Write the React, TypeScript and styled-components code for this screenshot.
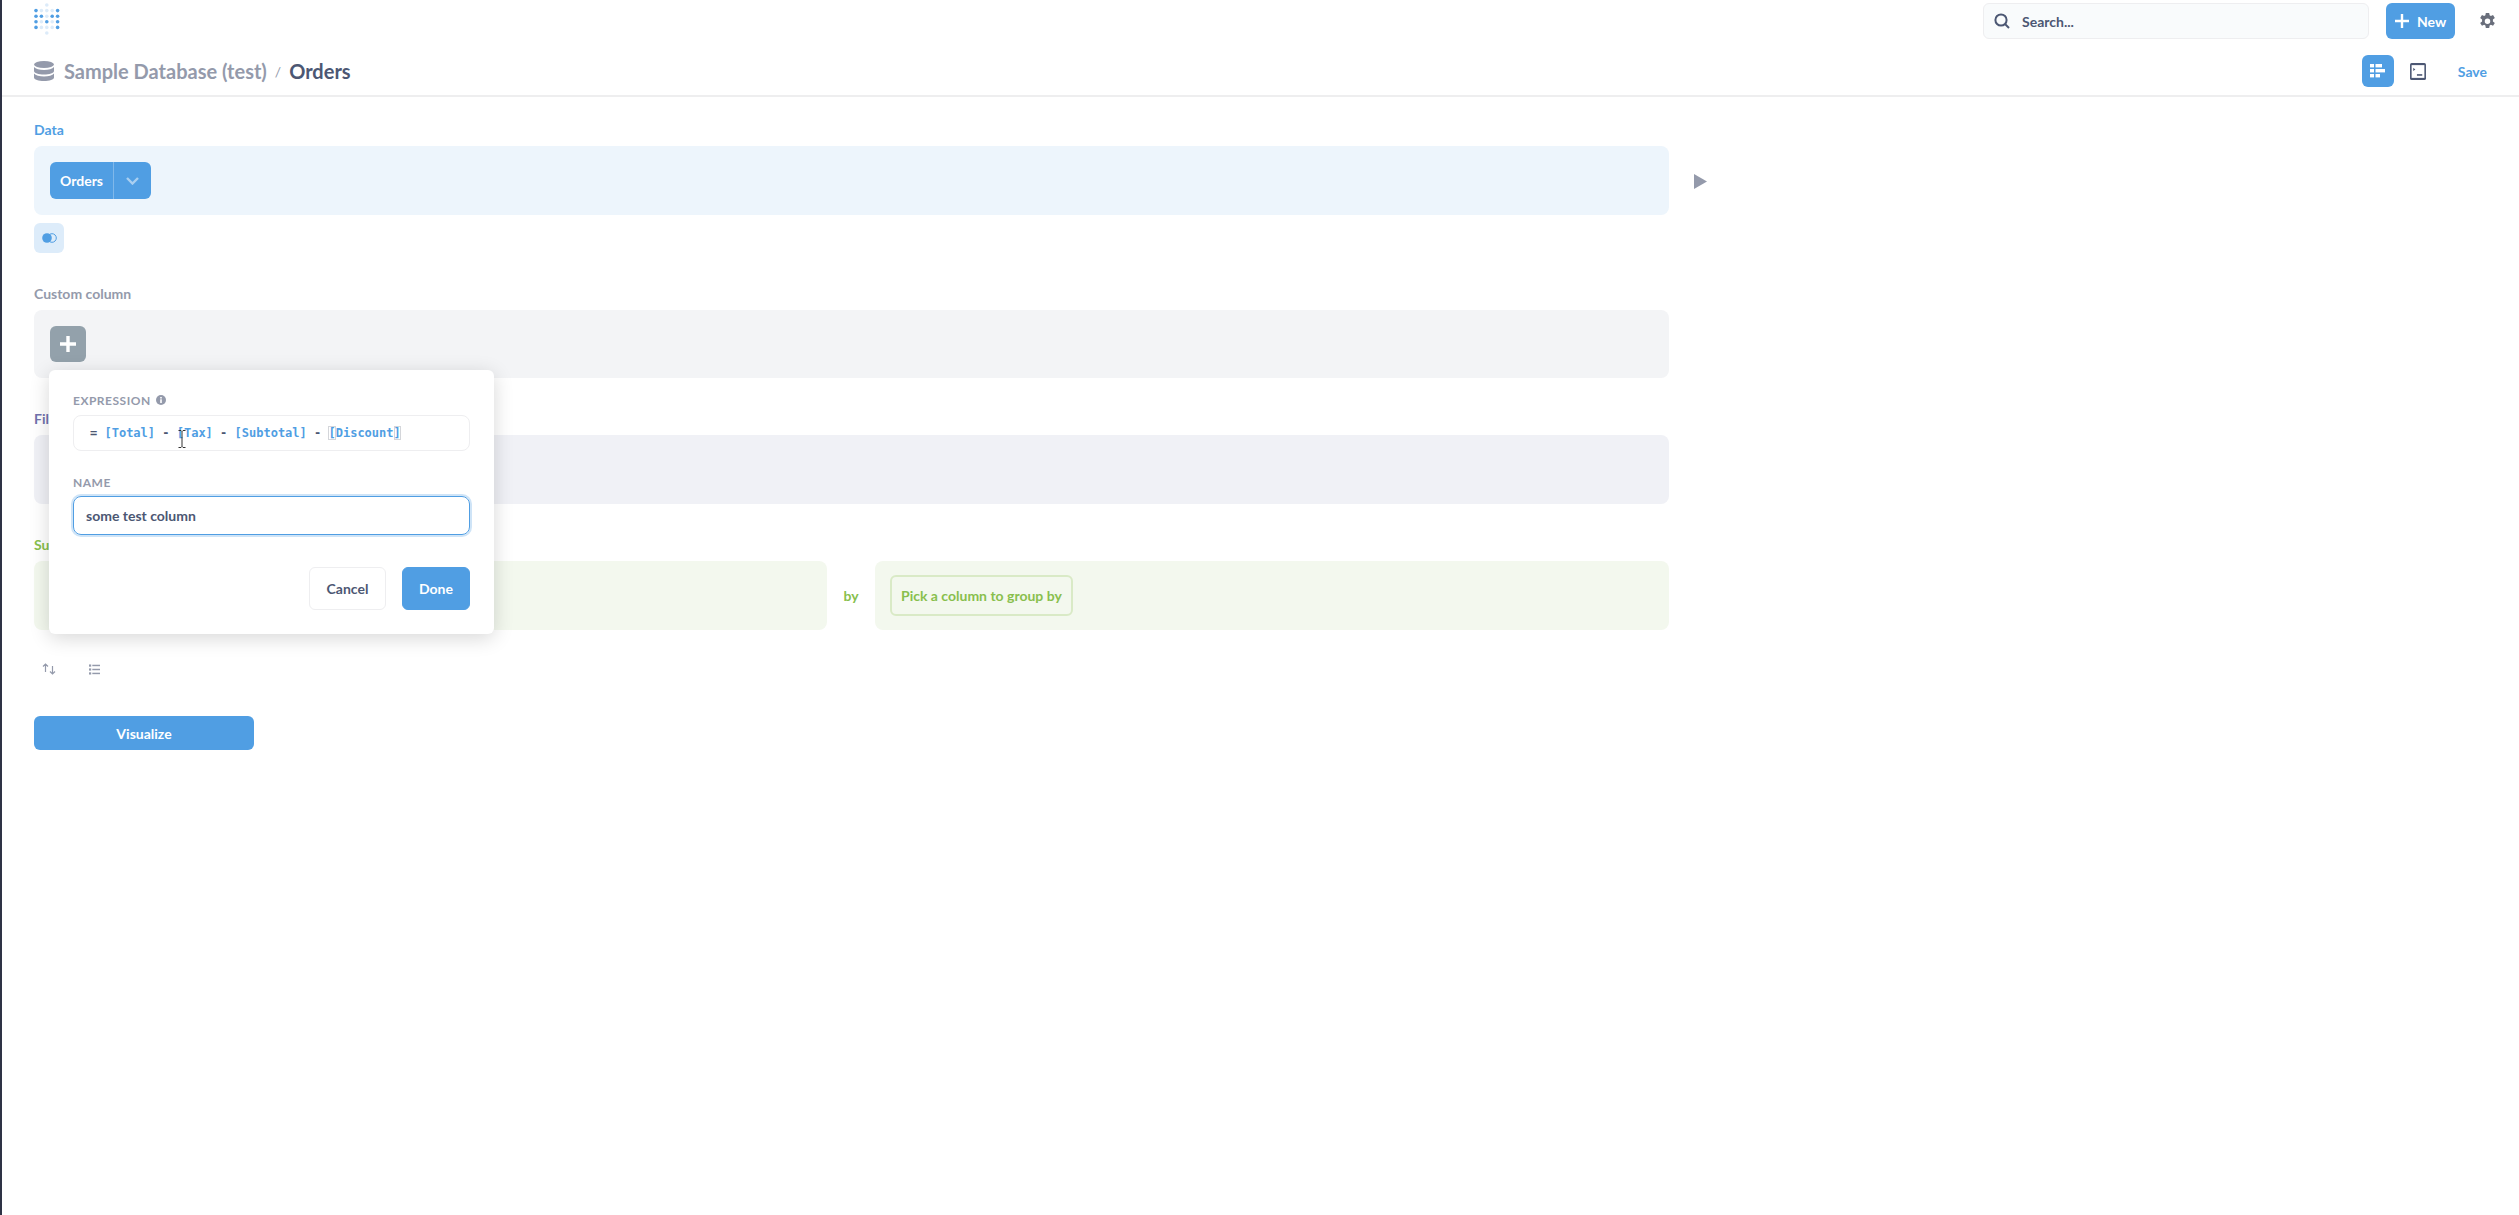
import React from "react";
import styled, { createGlobalStyle } from "styled-components";

const GlobalStyle = createGlobalStyle`
  html, body {
    margin: 0;
    padding: 0;
    background: #fff;
    font-family: Lato, "Liberation Sans", sans-serif;
  }
  * { box-sizing: border-box; }
`;

const Page = styled.div`
  position: relative;
  width: 2519px;
  height: 1215px;
  overflow: hidden;
  border-left: 2px solid #2e3245;
  background: #fff;
`;

const TopBar = styled.div`
  display: flex;
  align-items: center;
  justify-content: space-between;
  height: 42px;
  padding: 3px 23px 3px 32px;
`;

const LogoSlot = styled.div`
  display: flex;
  align-self: flex-start;
`;

const TopActions = styled.div`
  display: flex;
  align-items: center;
`;

const SearchBox = styled.div`
  display: flex;
  align-items: center;
  gap: 12px;
  width: 386px;
  height: 36px;
  padding: 0 10px;
  background: #f9fbfc;
  border: 1px solid #eeeef0;
  border-radius: 6px;
  color: #4c5773;
  font-size: 14px;
  font-weight: 700;
`;

const NewButton = styled.div`
  display: flex;
  align-items: center;
  gap: 8px;
  width: 69px;
  height: 36px;
  margin-left: 17px;
  padding-left: 9px;
  background: #509ee3;
  border-radius: 6px;
  color: #fff;
  font-size: 14px;
  font-weight: 700;
`;

const GearSlot = styled.div`
  display: flex;
  margin-left: 24px;
  color: #696e7b;
`;

const QueryBar = styled.div`
  display: flex;
  align-items: center;
  justify-content: space-between;
  height: 55px;
  padding: 5px 32px 0 32px;
  border-bottom: 2px solid #eeeeef;
`;

const Crumbs = styled.div`
  display: flex;
  align-items: center;
  font-size: 20px;
  font-weight: 700;
  color: #949aab;
`;

const CrumbIcon = styled.span`
  display: flex;
  margin-right: 10px;
`;

const CrumbDivider = styled.span`
  margin: 0 8px;
  font-size: 14px;
  font-weight: 400;
`;

const CrumbCurrent = styled.span`
  color: #4c5773;
`;

const QueryActions = styled.div`
  display: flex;
  align-items: center;
`;

const ModeButton = styled.div<{ $active?: boolean }>`
  display: flex;
  align-items: center;
  justify-content: center;
  width: ${(p) => (p.$active ? 32 : 48)}px;
  height: 32px;
  border-radius: 6px;
  color: ${(p) => (p.$active ? "#fff" : "#4c5773")};
  background: ${(p) => (p.$active ? "#509ee3" : "transparent")};
`;

const SaveLink = styled.span`
  margin-left: 16px;
  color: #509ee3;
  font-size: 14px;
  font-weight: 700;
`;

const Editor = styled.div`
  padding: 24px 0 0 32px;
`;

const SectionRow = styled.div`
  display: flex;
  align-items: flex-end;
`;

const Section = styled.div<{ $top?: number; $gap?: number }>`
  width: 1635px;
  margin-top: ${(p) => p.$top ?? 0}px;
  margin-bottom: ${(p) => p.$gap ?? 0}px;
`;

const SectionLabel = styled.div<{ $color: string }>`
  height: 18px;
  margin-bottom: 7px;
  color: ${(p) => p.$color};
  font-size: 14px;
  font-weight: 700;
  line-height: 18px;
`;

const StepBox = styled.div<{ $bg: string; $height?: number; $basis?: string }>`
  display: flex;
  align-items: center;
  flex: ${(p) => p.$basis ?? "none"};
  height: ${(p) => p.$height ?? 69}px;
  padding: 0 16px;
  background: ${(p) => p.$bg};
  border-radius: 8px;
`;

const DataPicker = styled.div`
  display: flex;
  align-items: center;
  height: 37px;
  background: #509ee3;
  border-radius: 6px;
  color: #fff;
  font-size: 14px;
  font-weight: 700;
`;

const DataName = styled.span`
  width: 64px;
  padding-left: 10px;
  border-right: 1px solid #80b8ea;
  line-height: 37px;
`;

const DataCaret = styled.span`
  display: flex;
  justify-content: center;
  width: 37px;
  color: #a9cff1;
`;

const PlayArrow = styled.div`
  display: flex;
  margin: 0 0 26px 25px;
  color: #949aab;
`;

const JoinButton = styled.div`
  display: flex;
  align-items: center;
  justify-content: center;
  width: 30px;
  height: 30px;
  margin: 8px 0 0;
  background: #ddecfa;
  border-radius: 6px;
  color: #509ee3;
`;

const AddButton = styled.div`
  display: flex;
  align-items: center;
  justify-content: center;
  width: 36px;
  height: 36px;
  background: #93a1ab;
  border-radius: 6px;
  color: #fff;
`;

const PlaceholderText = styled.span<{ $color: string }>`
  color: ${(p) => p.$color};
  font-size: 14px;
  font-weight: 700;
`;

const SummarizeRow = styled.div`
  display: flex;
  align-items: center;
`;

const ByLabel = styled.span`
  width: 48px;
  text-align: center;
  color: #88bf4d;
  font-size: 14px;
  font-weight: 700;
`;

const GroupButton = styled.div`
  display: flex;
  align-items: center;
  height: 41px;
  margin-left: -1px;
  padding: 0 9px;
  border: 2px solid #d9eac6;
  border-radius: 6px;
  color: #88bf4d;
  font-size: 14px;
  font-weight: 700;
`;

const Steps = styled.div`
  display: flex;
  align-items: center;
  gap: 33px;
  height: 28px;
  margin: 25px 0 0 8px;
  color: #949aab;
`;

const VisualizeButton = styled.div`
  display: flex;
  align-items: center;
  justify-content: center;
  width: 220px;
  height: 34px;
  margin-top: 33px;
  background: #509ee3;
  border-radius: 6px;
  color: #fff;
  font-size: 14px;
  font-weight: 700;
`;

const Popover = styled.div`
  position: absolute;
  left: 47px;
  top: 370px;
  width: 445px;
  height: 264px;
  padding: 21px 24px 0;
  background: #fff;
  border-radius: 6px;
  box-shadow: 0 4px 20px rgba(0, 0, 0, 0.16);
`;

const FieldLabel = styled.div`
  display: flex;
  align-items: center;
  gap: 5px;
  height: 18px;
  color: #949aab;
  font-size: 12px;
  font-weight: 700;
  letter-spacing: 0.5px;
`;

const ExpressionInput = styled.div`
  display: flex;
  align-items: center;
  height: 36px;
  margin: 6px 0 22px;
  padding-left: 16px;
  border: 1px solid #eeeef0;
  border-radius: 8px;
  font-family: "DejaVu Sans Mono", monospace;
  font-size: 12px;
  font-weight: 700;
  white-space: pre;
  color: #4c5773;
`;

const Token = styled.span`
  color: #509ee3;
`;

const MatchedBracket = styled.span`
  color: #509ee3;
  box-shadow: inset 0 0 0 1px #d4d6da;
`;

const NameInput = styled.div`
  display: flex;
  align-items: center;
  height: 39px;
  margin-top: 5px;
  padding-left: 12px;
  border: 1px solid #509ee3;
  border-radius: 8px;
  box-shadow: 0 0 0 2px #cfe4f7;
  color: #4c5773;
  font-size: 14px;
  font-weight: 700;
`;

const PopoverFooter = styled.div`
  display: flex;
  justify-content: flex-end;
  gap: 16px;
  margin-top: 32px;
`;

const PopoverButton = styled.div<{ $primary?: boolean }>`
  display: flex;
  align-items: center;
  justify-content: center;
  width: ${(p) => (p.$primary ? 68 : 77)}px;
  height: 43px;
  border: 1px solid ${(p) => (p.$primary ? "#509ee3" : "#eeeef0")};
  border-radius: 6px;
  background: ${(p) => (p.$primary ? "#509ee3" : "#fff")};
  color: ${(p) => (p.$primary ? "#fff" : "#4c5773")};
  font-size: 14px;
  font-weight: 700;
`;

const Cursor = styled.svg`
  position: absolute;
  left: 176px;
  top: 430px;
`;

const logoDots: [number, number, boolean][] = [
  [2, 0, false],
  [0, 1, true], [1, 1, false], [2, 1, false], [3, 1, false], [4, 1, true],
  [0, 2, true], [1, 2, true], [2, 2, false], [3, 2, true], [4, 2, true],
  [0, 3, true], [1, 3, false], [2, 3, true], [3, 3, false], [4, 3, true],
  [0, 4, true], [1, 4, false], [2, 4, false], [3, 4, false], [4, 4, true],
  [2, 5, false],
];

function Logo() {
  return (
    <svg width="26" height="32" viewBox="0 0 26 32">
      {logoDots.map(([c, r, on]) => (
        <circle key={`${c}-${r}`} cx={2 + c * 5.4} cy={2 + r * 5.6} r="1.8" fill={on ? "#509ee3" : "#dcebf9"} />
      ))}
    </svg>
  );
}

export default function App() {
  return (
    <Page>
      <GlobalStyle />
      <TopBar>
        <LogoSlot>
          <Logo />
        </LogoSlot>
        <TopActions>
          <SearchBox>
            <svg width="16" height="16" viewBox="0 0 16 16" fill="none" stroke="#4c5773" strokeWidth="2">
              <circle cx="7" cy="7" r="5.6" />
              <path d="M11 11l4 4" />
            </svg>
            Search...
          </SearchBox>
          <NewButton>
            <svg width="14" height="14" viewBox="0 0 14 14" fill="none" stroke="#fff" strokeWidth="2.4">
              <path d="M7 0v14M0 7h14" />
            </svg>
            New
          </NewButton>
          <GearSlot>
            <svg width="17" height="17" viewBox="0 0 16 16" fill="currentColor">
              <path fillRule="evenodd" d="M6.4 0h3.2l.4 2.2 1.2.6 2-.9 1.7 2.8-1.8 1.3v1.9l1.8 1.4-1.7 2.7-2-.9-1.2.7-.4 2.2H6.4L6 11.8l-1.2-.7-2 .9L1.1 9.3l1.8-1.4V6L1.1 4.7l1.7-2.8 2 .9L6 2.2zM8 5.2a2.6 2.6 0 1 0 0 5.2 2.6 2.6 0 0 0 0-5.2z" />
            </svg>
          </GearSlot>
        </TopActions>
      </TopBar>
      <QueryBar>
        <Crumbs>
          <CrumbIcon>
            <svg width="20" height="20" viewBox="0 0 20 20" fill="#949aab">
              <ellipse cx="10" cy="3.5" rx="10" ry="3.5" />
              <path d="M0 6c1.5 2 5.5 3 10 3s8.5-1 10-3v4c0 2-4.5 3.5-10 3.5S0 12 0 10z" />
              <path d="M0 12.5c1.5 2 5.5 3 10 3s8.5-1 10-3v4c0 2-4.5 3.5-10 3.5S0 18.5 0 16.5z" />
            </svg>
          </CrumbIcon>
          Sample Database (test)
          <CrumbDivider>/</CrumbDivider>
          <CrumbCurrent>Orders</CrumbCurrent>
        </Crumbs>
        <QueryActions>
          <ModeButton $active>
            <svg width="15" height="14" viewBox="0 0 15 14" fill="currentColor">
              <rect x="0" y="0" width="4" height="3.4" />
              <rect x="5.5" y="0" width="6.5" height="3.4" />
              <rect x="0" y="5" width="4" height="3.4" />
              <rect x="5.5" y="5" width="9.5" height="3.4" />
              <rect x="0" y="10" width="4" height="3.4" />
              <rect x="5.5" y="10" width="4.5" height="3.4" />
            </svg>
          </ModeButton>
          <ModeButton>
            <svg width="16" height="17" viewBox="0 0 15 16">
              <rect x="0" y="0" width="15" height="16" rx="1.5" fill="currentColor" />
              <rect x="1.5" y="2" width="12" height="12" fill="#fff" />
              <path d="M3 4.5l2 1.5-2 1.5z" fill="currentColor" />
              <rect x="6.5" y="10.5" width="5" height="1.5" fill="currentColor" />
            </svg>
          </ModeButton>
          <SaveLink>Save</SaveLink>
        </QueryActions>
      </QueryBar>
      <Editor>
        <SectionRow>
          <Section>
            <SectionLabel $color="#509ee3">Data</SectionLabel>
            <StepBox $bg="#edf5fc">
              <DataPicker>
                <DataName>Orders</DataName>
                <DataCaret>
                  <svg width="13" height="8" viewBox="0 0 13 8" fill="none" stroke="currentColor" strokeWidth="2.4">
                    <path d="M1 1l5.500 5.500L12 1" />
                  </svg>
                </DataCaret>
              </DataPicker>
            </StepBox>
          </Section>
          <PlayArrow>
            <svg width="13" height="15" viewBox="0 0 13 15" fill="currentColor">
              <path d="M0 0l13 7.5L0 15z" />
            </svg>
          </PlayArrow>
        </SectionRow>
        <JoinButton>
          <svg width="15" height="10" viewBox="0 0 15 10">
            <circle cx="5" cy="5" r="4.8" fill="currentColor" />
            <circle cx="10" cy="5" r="4.3" fill="none" stroke="currentColor" strokeWidth="1" />
          </svg>
        </JoinButton>
        <Section $top={32} $gap={32}>
          <SectionLabel $color="#949aab">Custom column</SectionLabel>
          <StepBox $bg="#f3f4f6" $height={68}>
            <AddButton>
              <svg width="16" height="16" viewBox="0 0 16 16" fill="none" stroke="currentColor" strokeWidth="3.4">
                <path d="M8 0v16M0 8h16" />
              </svg>
            </AddButton>
          </StepBox>
        </Section>
        <Section $gap={32}>
          <SectionLabel $color="#7172ad">Filter</SectionLabel>
          <StepBox $bg="#f0f1f6">
            <PlaceholderText $color="#7172ad">Add filters to narrow your answer</PlaceholderText>
          </StepBox>
        </Section>
        <Section>
          <SectionLabel $color="#88bf4d">Summarize</SectionLabel>
          <SummarizeRow>
            <StepBox $bg="#f3f8ee" $basis="0 0 793px">
              <PlaceholderText $color="#88bf4d">Pick the metric you want to see</PlaceholderText>
            </StepBox>
            <ByLabel>by</ByLabel>
            <StepBox $bg="#f3f8ee" $basis="1">
              <GroupButton>Pick a column to group by</GroupButton>
            </StepBox>
          </SummarizeRow>
        </Section>
        <Steps>
          <svg width="14" height="12" viewBox="0 0 14 12" fill="none" stroke="currentColor" strokeWidth="1.2">
            <path d="M3.5 9V1M1 3.5L3.5 1 6 3.5M10.5 3v8M8 8.5l2.5 2.5L13 8.5" />
          </svg>
          <svg width="11" height="11" viewBox="0 0 12 12" fill="currentColor">
            <rect x="0" y="0.5" width="2.4" height="2.4" />
            <rect x="3.6" y="0.8" width="8.4" height="1.6" />
            <rect x="0" y="4.8" width="2.4" height="2.4" />
            <rect x="3.6" y="5.2" width="8.4" height="1.6" />
            <rect x="0" y="9.1" width="2.4" height="2.4" />
            <rect x="3.6" y="9.5" width="8.4" height="1.6" />
          </svg>
        </Steps>
        <VisualizeButton>Visualize</VisualizeButton>
      </Editor>
      <Popover>
        <FieldLabel>
          EXPRESSION
          <svg width="10" height="10" viewBox="0 0 10 10">
            <circle cx="5" cy="5" r="5" fill="#949aab" />
            <rect x="4.2" y="4.3" width="1.6" height="3.7" fill="#fff" />
            <rect x="4.2" y="2" width="1.6" height="1.5" fill="#fff" />
          </svg>
        </FieldLabel>
        <ExpressionInput>
          {"= "}
          <Token>[Total]</Token>
          {" - "}
          <Token>[Tax]</Token>
          {" - "}
          <Token>[Subtotal]</Token>
          {" - "}
          <MatchedBracket>[</MatchedBracket>
          <Token>Discount</Token>
          <MatchedBracket>]</MatchedBracket>
        </ExpressionInput>
        <FieldLabel>NAME</FieldLabel>
        <NameInput>some test column</NameInput>
        <PopoverFooter>
          <PopoverButton>Cancel</PopoverButton>
          <PopoverButton $primary>Done</PopoverButton>
        </PopoverFooter>
      </Popover>
      <Cursor width="8" height="18" viewBox="0 0 8 18" fill="none" stroke="#333" strokeWidth="1">
        <path d="M0.5 0.5h2.5l1 1 1-1h2.5M4 1.5v15M0.5 17.5h2.5l1-1 1 1h2.5" />
      </Cursor>
    </Page>
  );
}
